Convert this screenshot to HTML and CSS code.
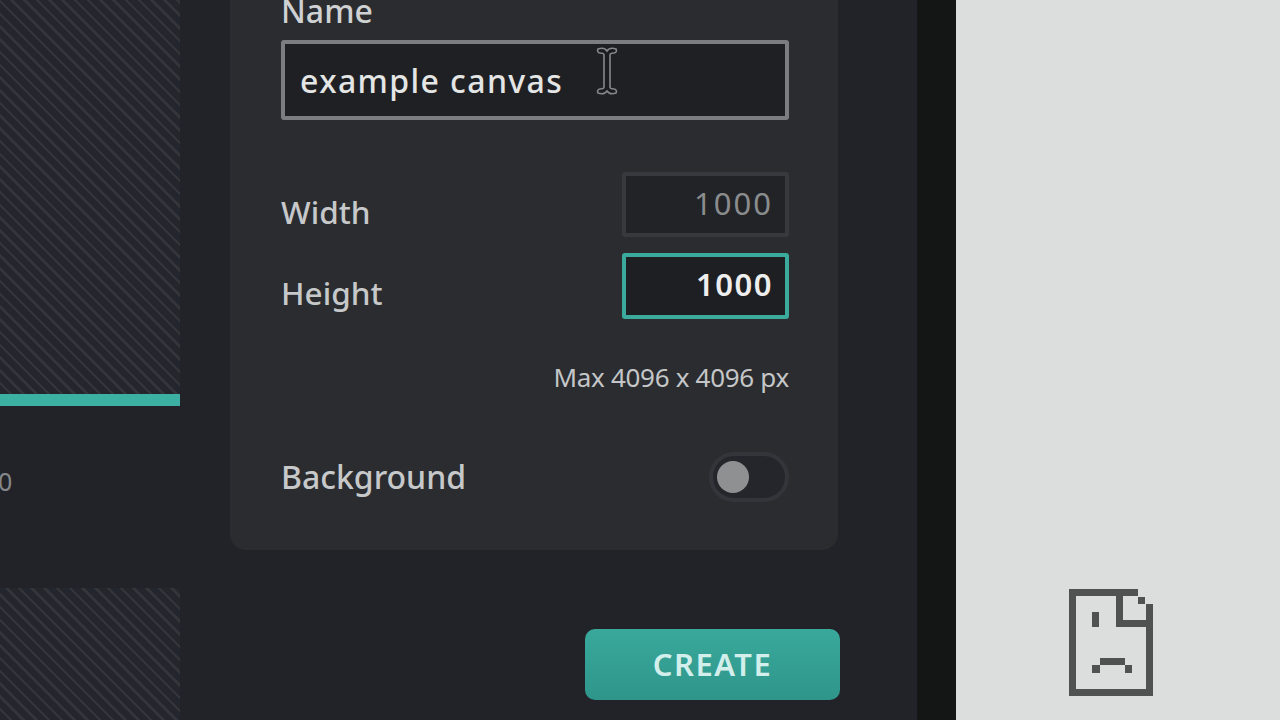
FILE: index.html
```html
<!DOCTYPE html>
<html lang="en">
<head>
  <meta charset="UTF-8" />
  <title>New canvas</title>
  <link rel="stylesheet" href="styles.css">
</head>
<body>
  <div class="app">
    <div class="side">
      <div class="hatch hatch-top"></div>
      <div class="progress"></div>
      <div class="side-row"><span class="side-value">0</span></div>
      <div class="hatch hatch-bottom"></div>
    </div>

    <div class="main">
      <div class="card">
        <div class="name-label">Name</div>
        <div class="name-input">
          example canvas
          <svg class="text-cursor" viewBox="0 0 26 48" width="26" height="48" aria-hidden="true">
            <path d="M4 2c3-1 7-1 9 2c2-3 6-3 9-2c1 2 0 4-2 4c-2 0-4 0-4 2v32c0 2 2 2 4 2c2 0 3 2 2 4c-3 1-7 1-9-2c-2 3-6 3-9 2c-1-2 0-4 2-4c2 0 4 0 4-2V8c0-2-2-2-4-2c-2 0-3-2-2-4z" fill="#1b1c20" stroke="#85878a" stroke-width="1.6"/>
          </svg>
        </div>
        <div class="size-row size-row-width">
          <span class="label">Width</span>
          <div class="num-input">1000</div>
        </div>
        <div class="size-row">
          <span class="label label-height">Height</span>
          <div class="num-input num-input-active">1000</div>
        </div>
        <p class="max-size">Max 4096 x 4096 px</p>
        <div class="bg-row">
          <span class="label label-flat">Background</span>
          <div class="toggle"><span class="toggle-knob"></span></div>
        </div>
      </div>
      <div class="actions">
        <button class="create-btn">CREATE</button>
      </div>
    </div>
  </div>

  <div class="strip"></div>

  <div class="error-pane">
    <svg class="sad-page" viewBox="0 0 84 107" width="84" height="107" aria-hidden="true">
      <path d="M0 0h69v7H54v24h23V15h7v92H0zM7 7v93h70V38H47V7zM69 8h7v7h-7zM23 23h7v15h-7zM31 69h25v7H31zM23 76h8v8h-8zM56 76h7v8h-7z" fill="#505151" fill-rule="evenodd"/>
    </svg>
  </div>
</body>
</html>
```

FILE: styles.css
```css
body {
  margin: 0;
  width: 1280px;
  height: 720px;
  overflow: hidden;
  display: flex;
  font-family: "Noto Sans", sans-serif;
  background-color: #dcdedd;
}

.app {
  width: 917px;
  height: 720px;
  display: flex;
  background-color: #212328;
}

/* Left column, cut off by the window */
.side {
  width: 180px;
  display: flex;
  flex-direction: column;
}
.hatch {
  background-color: #23262c;
  background-image: repeating-linear-gradient(45deg, #23262c 0, #23262c 6.5px, #33353a 6.5px, #33353a 9px);
}
.hatch-top {
  height: 394px;
}
.hatch-bottom {
  flex: 1;
}
.progress {
  height: 12px;
  background-color: #3cb0a2;
}
.side-row {
  height: 182px;
  display: flex;
  align-items: center;
  padding-bottom: 32px;
  box-sizing: border-box;
  overflow: hidden;
}
.side-value {
  margin-left: -2px;
  font-size: 25px;
  color: #85878a;
}

.main {
  width: 610px;
  margin-left: 50px;
  display: flex;
  flex-direction: column;
}

/* Form card */
.card {
  width: 608px;
  height: 550px;
  box-sizing: border-box;
  padding: 0 49px 0 51px;
  background-color: #2a2c30;
  border-radius: 0 0 16px 16px;
  overflow: hidden;
}
.name-label {
  height: 40px;
  margin-top: -9px;
  font-size: 32px;
  font-weight: 500;
  line-height: 40px;
  color: #cfd1d2;
}
.name-input {
  position: relative;
  height: 80px;
  margin-top: 9px;
  padding-left: 15px;
  box-sizing: border-box;
  border: 4px solid #7b7d80;
  border-radius: 3px;
  background-color: #1f2024;
  font-size: 32px;
  font-weight: 500;
  line-height: 74px;
  letter-spacing: 1.4px;
  color: #e4e5e5;
}
.text-cursor {
  position: absolute;
  left: 309px;
  top: 3px;
}

.size-row {
  display: flex;
  justify-content: space-between;
  align-items: center;
  margin-top: 16px;
}
.size-row-width {
  margin-top: 52px;
}
.label {
  margin-top: 14px;
  font-size: 31.5px;
  font-weight: 500;
  color: #c6c8c9;
}
.label-height {
  margin-top: 12px;
}
.label-flat {
  margin-top: -2px;
  font-size: 32px;
}
.num-input {
  width: 167px;
  height: 65px;
  box-sizing: border-box;
  padding-right: 12px;
  border: 4px solid #37393e;
  border-radius: 3px;
  background-color: #222327;
  font-size: 31px;
  line-height: 55px;
  letter-spacing: 2px;
  text-align: right;
  color: #8a8c8e;
}
.num-input-active {
  height: 66px;
  border-color: #3ba99c;
  background-color: #1e1f23;
  font-weight: 600;
  letter-spacing: 1.5px;
  color: #eeeeee;
}
.max-size {
  margin: 40px 0 0;
  font-size: 26px;
  line-height: 36px;
  letter-spacing: -0.3px;
  text-align: right;
  color: #c4c6c7;
}
.bg-row {
  display: flex;
  justify-content: space-between;
  align-items: center;
  margin-top: 57px;
}
.toggle {
  width: 80px;
  height: 50px;
  box-sizing: border-box;
  padding: 5px 5px 5px 4px;
  border: 4px solid #33353a;
  border-radius: 25px;
  background-color: #25262b;
}
.toggle-knob {
  display: block;
  width: 32px;
  height: 32px;
  border-radius: 50%;
  background-color: #8e9092;
}

.actions {
  display: flex;
  justify-content: flex-end;
  margin-top: 79px;
}
.create-btn {
  width: 255px;
  height: 71px;
  padding: 0 0 2px;
  border: none;
  border-radius: 10px;
  background: linear-gradient(#39a99c, #2f958a);
  font-family: "Noto Sans", sans-serif;
  font-size: 31px;
  font-weight: 600;
  letter-spacing: 1.5px;
  color: #d3efeb;
}

.strip {
  width: 39px;
  background-color: #141515;
}

.error-pane {
  flex: 1;
  padding: 589px 0 0 113px;
  box-sizing: border-box;
}
.sad-page {
  display: block;
}
```
